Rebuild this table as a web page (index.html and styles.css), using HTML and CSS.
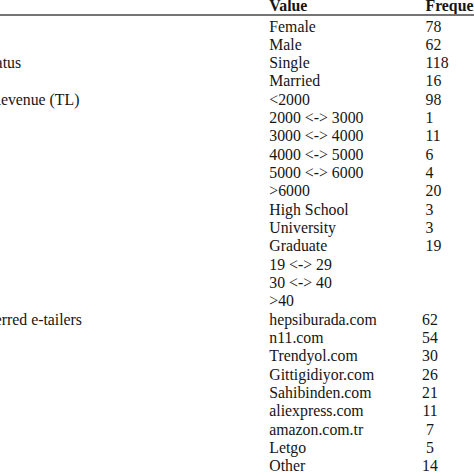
FILE: index.html
```html
<!DOCTYPE html>
<html>
<head>
<meta charset="utf-8">
<link rel="stylesheet" href="styles.css">
</head>
<body>
<div class="frame">
<table class="tbl">
<thead>
<tr><th class="lab"></th><th class="val">Value</th><th class="frq">Frequency</th><th class="pct">Percentage</th></tr>
</thead>
<tbody>
<tr class="first"><td class="lab">Gender</td><td class="val">Female</td><td class="frq">78</td><td></td></tr>
<tr><td class="lab"></td><td class="val">Male</td><td class="frq">62</td><td></td></tr>
<tr><td class="lab">Marital Status</td><td class="val">Single</td><td class="frq">118</td><td></td></tr>
<tr><td class="lab"></td><td class="val">Married</td><td class="frq">16</td><td></td></tr>
<tr><td class="lab">Monthly Revenue (TL)</td><td class="val">&lt;2000</td><td class="frq">98</td><td></td></tr>
<tr><td class="lab"></td><td class="val">2000 &lt;-&gt; 3000</td><td class="frq">1</td><td></td></tr>
<tr><td class="lab"></td><td class="val">3000 &lt;-&gt; 4000</td><td class="frq">11</td><td></td></tr>
<tr><td class="lab"></td><td class="val">4000 &lt;-&gt; 5000</td><td class="frq">6</td><td></td></tr>
<tr><td class="lab"></td><td class="val">5000 &lt;-&gt; 6000</td><td class="frq">4</td><td></td></tr>
<tr><td class="lab"></td><td class="val">&gt;6000</td><td class="frq">20</td><td></td></tr>
<tr><td class="lab">Education</td><td class="val">High School</td><td class="frq">3</td><td></td></tr>
<tr><td class="lab"></td><td class="val">University</td><td class="frq">3</td><td></td></tr>
<tr><td class="lab"></td><td class="val">Graduate</td><td class="frq">19</td><td></td></tr>
<tr><td class="lab">Age</td><td class="val">19 &lt;-&gt; 29</td><td class="frq"></td><td></td></tr>
<tr><td class="lab"></td><td class="val">30 &lt;-&gt; 40</td><td class="frq"></td><td></td></tr>
<tr><td class="lab"></td><td class="val">&gt;40</td><td class="frq"></td><td></td></tr>
<tr><td class="lab">Most Preferred e-tailers</td><td class="val">hepsiburada.com</td><td class="frq c"><span class="cn">62</span></td><td></td></tr>
<tr><td class="lab"></td><td class="val">n11.com</td><td class="frq c"><span class="cn">54</span></td><td></td></tr>
<tr><td class="lab"></td><td class="val">Trendyol.com</td><td class="frq c"><span class="cn">30</span></td><td></td></tr>
<tr><td class="lab"></td><td class="val">Gittigidiyor.com</td><td class="frq c"><span class="cn">26</span></td><td></td></tr>
<tr><td class="lab"></td><td class="val">Sahibinden.com</td><td class="frq c"><span class="cn">21</span></td><td></td></tr>
<tr><td class="lab"></td><td class="val">aliexpress.com</td><td class="frq c"><span class="cn">11</span></td><td></td></tr>
<tr><td class="lab"></td><td class="val">amazon.com.tr</td><td class="frq c"><span class="cn">7</span></td><td></td></tr>
<tr><td class="lab"></td><td class="val">Letgo</td><td class="frq c"><span class="cn">5</span></td><td></td></tr>
<tr><td class="lab"></td><td class="val">Other</td><td class="frq c"><span class="cn">14</span></td><td></td></tr>
</tbody>
</table>
</div>
</body>
</html>
```
FILE: styles.css
```css
html, body {
  margin: 0;
  padding: 0;
  background: #ffffff;
  overflow: hidden;
}
.frame {
  width: 474px;
  height: 474px;
  overflow: hidden;
}
.tbl {
  border-collapse: collapse;
  margin-left: -68px;
  margin-top: -2px;
  font-family: "Liberation Serif", "Times New Roman", serif;
  font-size: 15.8px;
  color: #151515;
  table-layout: fixed;
  width: 700px;
}
.tbl th, .tbl td {
  padding: 0;
  text-align: left;
  vertical-align: top;
  white-space: nowrap;
  overflow: hidden;
}
.tbl th {
  font-weight: bold;
  line-height: 16px;
  border-bottom: 2px solid #747474;
}
.tbl td {
  line-height: 18.33px;
}
.tbl .first td {
  padding-top: 1.5px;
}
.lab { width: 337.3px; }
.val { width: 150.7px; }
.frq { width: 80px; padding-left: 5.5px !important; }
.pct { width: 132px; }
.frq.c { padding-left: 0 !important; }
.cn {
  display: inline-block;
  width: 20px;
  text-align: center;
}
```
